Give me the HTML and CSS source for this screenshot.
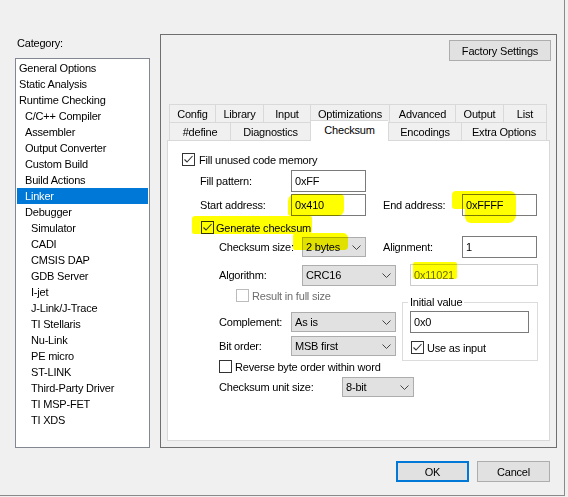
FILE: index.html
```html
<!DOCTYPE html>
<html>
<head>
<meta charset="utf-8">
<title>Options</title>
<link rel="stylesheet" href="styles.css">
</head>
<body>
<div class="dialog">
  <div class="main">
    <div class="left">
      <div class="cat-label">Category:</div>
      <div class="list">
        <div class="item">General Options</div>
        <div class="item">Static Analysis</div>
        <div class="item">Runtime Checking</div>
        <div class="item l1">C/C++ Compiler</div>
        <div class="item l1">Assembler</div>
        <div class="item l1">Output Converter</div>
        <div class="item l1">Custom Build</div>
        <div class="item l1">Build Actions</div>
        <div class="item l1 sel">Linker</div>
        <div class="item l1">Debugger</div>
        <div class="item l2">Simulator</div>
        <div class="item l2">CADI</div>
        <div class="item l2">CMSIS DAP</div>
        <div class="item l2">GDB Server</div>
        <div class="item l2">I-jet</div>
        <div class="item l2">J-Link/J-Trace</div>
        <div class="item l2">TI Stellaris</div>
        <div class="item l2">Nu-Link</div>
        <div class="item l2">PE micro</div>
        <div class="item l2">ST-LINK</div>
        <div class="item l2">Third-Party Driver</div>
        <div class="item l2">TI MSP-FET</div>
        <div class="item l2">TI XDS</div>
      </div>
    </div>
    <div class="panel">
      <div class="panel-top"><div class="btn factory">Factory Settings</div></div>
      <div class="tabs">
        <div class="tabrow">
          <div class="tab w-config">Config</div>
          <div class="tab w-library">Library</div>
          <div class="tab w-input">Input</div>
          <div class="tab w-optim">Optimizations</div>
          <div class="tab w-adv">Advanced</div>
          <div class="tab w-output">Output</div>
          <div class="tab w-list last">List</div>
        </div>
        <div class="tabrow">
          <div class="tab w-define">#define</div>
          <div class="tab w-diag">Diagnostics</div>
          <div class="tab w-check active">Checksum</div>
          <div class="tab w-enc">Encodings</div>
          <div class="tab w-extra last">Extra Options</div>
        </div>
      </div>
      <div class="content">
        <div class="row row-a">
          <span class="cb"><svg width="13" height="13" viewBox="0 0 13 13"><polyline points="2.5,6.5 5,9 10.5,3" fill="none" stroke="#333" stroke-width="1.1"/></svg></span>
          <span>Fill unused code memory</span>
        </div>
        <div class="row row-b">
          <span class="lbl w91">Fill pattern:</span>
          <span class="edit w75">0xFF</span>
        </div>
        <div class="row row-c">
          <span class="lbl w91">Start address:</span>
          <span class="edit w75">0x410</span>
          <span class="lbl w79 gap17">End address:</span>
          <span class="edit w75">0xFFFF</span>
        </div>
        <div class="row row-d">
          <span class="cb"><svg width="13" height="13" viewBox="0 0 13 13"><polyline points="2.5,6.5 5,9 10.5,3" fill="none" stroke="#333" stroke-width="1.1"/></svg></span>
          <span>Generate checksum</span>
        </div>
        <div class="row row-e">
          <span class="lbl w83">Checksum size:</span>
          <span class="select w64"><span>2 bytes</span><svg width="9" height="5" viewBox="0 0 9 5"><polyline points="0.5,0.5 4.5,4.5 8.5,0.5" fill="none" stroke="#444" stroke-width="1"/></svg></span>
          <span class="lbl w79 gap17">Alignment:</span>
          <span class="edit w75">1</span>
        </div>
        <div class="row row-f">
          <span class="lbl w83">Algorithm:</span>
          <span class="select w94 h21"><span>CRC16</span><svg width="9" height="5" viewBox="0 0 9 5"><polyline points="0.5,0.5 4.5,4.5 8.5,0.5" fill="none" stroke="#444" stroke-width="1"/></svg></span>
          <span class="edit disabled w128">0x11021</span>
        </div>
        <div class="row row-g">
          <span class="cb off"></span>
          <span class="dim">Result in full size</span>
        </div>
        <div class="block">
          <div class="lcol">
            <div class="row row-h">
              <span class="lbl w72">Complement:</span>
              <span class="select w105"><span>As is</span><svg width="9" height="5" viewBox="0 0 9 5"><polyline points="0.5,0.5 4.5,4.5 8.5,0.5" fill="none" stroke="#444" stroke-width="1"/></svg></span>
            </div>
            <div class="row row-i">
              <span class="lbl w72">Bit order:</span>
              <span class="select w105"><span>MSB first</span><svg width="9" height="5" viewBox="0 0 9 5"><polyline points="0.5,0.5 4.5,4.5 8.5,0.5" fill="none" stroke="#444" stroke-width="1"/></svg></span>
            </div>
            <div class="row row-j">
              <span class="cb"></span>
              <span>Reverse byte order within word</span>
            </div>
            <div class="row row-k">
              <span class="lbl w123">Checksum unit size:</span>
              <span class="select w72"><span>8-bit</span><svg width="9" height="5" viewBox="0 0 9 5"><polyline points="0.5,0.5 4.5,4.5 8.5,0.5" fill="none" stroke="#444" stroke-width="1"/></svg></span>
            </div>
          </div>
          <div class="group">
            <span class="legend">Initial value</span>
            <span class="edit w119 g-edit">0x0</span>
            <div class="row g-check">
              <span class="cb"><svg width="13" height="13" viewBox="0 0 13 13"><polyline points="2.5,6.5 5,9 10.5,3" fill="none" stroke="#333" stroke-width="1.1"/></svg></span>
              <span>Use as input</span>
            </div>
          </div>
        </div>
      </div>
    </div>
  </div>
  <div class="bottom">
    <div class="btn ok">OK</div>
    <div class="btn cancel">Cancel</div>
  </div>
  <div class="hl hl-start"></div>
  <div class="hl hl-gen"></div>
  <div class="hl hl-size"></div>
  <div class="hl hl-end1"></div>
  <div class="hl hl-end2"></div>
  <div class="hl hl-alg"></div>
</div>
</body>
</html>
```
FILE: styles.css
```css
* { box-sizing: border-box; }
html, body { margin: 0; padding: 0; }
body {
  background: #f0f0f0;
  font-family: "Liberation Sans", Arial, sans-serif;
  font-size: 11px;
  letter-spacing: -0.2px;
  color: #000;
  width: 568px;
  height: 497px;
  overflow: hidden;
}
.dialog {
  position: relative;
  width: 565px;
  height: 496px;
  border-right: 1px solid #8a8a8a;
  border-bottom: 1px solid #8a8a8a;
  padding: 34px 0 0 15px;
}
.main { display: flex; gap: 10px; height: 414px; }
.left { width: 135px; display: flex; flex-direction: column; }
.cat-label { margin: 1px 0 0 2px; height: 16px; line-height: 16px; }
.list {
  margin-top: 7px;
  height: 390px;
  border: 1px solid #828790;
  background: #fff;
  padding: 1px;
}
.item { height: 16px; line-height: 16px; padding-left: 2px; white-space: nowrap; }
.item.l1 { padding-left: 8px; }
.item.l2 { padding-left: 14px; }
.item.sel { background: #0078d7; color: #fff; }

.panel {
  width: 397px;
  height: 414px;
  border: 1px solid #6f6f6f;
  padding: 5px 5px 0 6px;
  display: flex;
  flex-direction: column;
}
.panel-top { display: flex; justify-content: flex-end; height: 21px; }
.btn {
  height: 21px;
  background: #e1e1e1;
  border: 1px solid #adadad;
  display: flex;
  align-items: center;
  justify-content: center;
  white-space: nowrap;
}
.factory { width: 102px; }

.tabs { margin: 43px 0 0 2px; }
.tabrow { display: flex; height: 18px; }
.tab {
  height: 18px;
  border-top: 1px solid #d9d9d9;
  border-left: 1px solid #d9d9d9;
  background: #f0f0f0;
  display: flex;
  align-items: center;
  justify-content: center;
  white-space: nowrap;
}
.tab.last { border-right: 1px solid #d9d9d9; }
.tab.active {
  position: relative;
  z-index: 1;
  margin-top: -2px;
  height: 21px;
  background: #fff;
  padding-bottom: 3px;
}
.w-config { width: 46px; }
.w-library { width: 48px; }
.w-input { width: 47px; }
.w-optim { width: 79px; }
.w-adv { width: 66px; }
.w-output { width: 48px; }
.w-list { width: 44px; }
.w-define { width: 61px; }
.w-diag { width: 80px; }
.w-check { width: 78px; }
.w-enc { width: 73px; }
.w-extra { width: 86px; }

.content {
  width: 383px;
  height: 301px;
  border: 1px solid #d9d9d9;
  background: #fff;
}
.row { display: flex; align-items: center; white-space: nowrap; }
.cb {
  width: 13px;
  height: 13px;
  border: 1px solid #333;
  background: #fff;
  flex: none;
  position: relative;
}
.cb svg { position: absolute; left: -1px; top: -1px; }
.cb.off { border-color: #bcbcbc; }
.dim { color: #6d6d6d; }
.lbl { flex: none; }
.w72 { width: 72px; }
.w79 { width: 79px; }
.w83 { width: 83px; }
.w91 { width: 91px; }
.w123 { width: 123px; }
.gap17 { margin-left: 17px; }
.edit {
  flex: none;
  height: 22px;
  border: 1px solid #7a7a7a;
  background: #fff;
  padding-left: 3px;
  display: flex;
  align-items: center;
}
.edit.disabled { border-color: #cccccc; color: #6d6d6d; margin-left: 14px; }
.w75 { width: 75px; }
.w119 { width: 119px; }
.w128 { width: 128px; }
.select {
  flex: none;
  height: 20px;
  border: 1px solid #adadad;
  background: #e1e1e1;
  padding: 0 4px 0 3px;
  display: flex;
  align-items: center;
  justify-content: space-between;
}
.select.h21 { height: 21px; }
.w64 { width: 64px; }
.w94 { width: 94px; }
.w105 { width: 105px; }
.select.w72 { width: 72px; }

.row-a { margin: 12px 0 0 14px; height: 13px; gap: 4px; }
.row-b { margin: 4px 0 0 32px; height: 22px; }
.row-c { margin: 2px 0 0 32px; height: 22px; }
.row-d { margin: 5px 0 0 33px; height: 13px; gap: 2px; }
.row-e { margin: 2px 0 0 51px; height: 22px; }
.row-f { margin: 6px 0 0 51px; height: 22px; }
.row-g { margin: 3px 0 0 68px; height: 13px; gap: 3px; }
.block { display: flex; }
.lcol { width: 183px; margin-left: 51px; padding-top: 10px; flex: none; }
.row-h { height: 20px; }
.row-i { height: 20px; margin-top: 4px; }
.row-j { height: 13px; margin-top: 4px; gap: 3px; }
.row-k { height: 20px; margin-top: 4px; }
.group {
  width: 136px;
  height: 59px;
  border: 1px solid #dcdcdc;
  flex: none;
}
.legend {
  display: block;
  width: fit-content;
  margin: -8px 0 0 5px;
  padding: 0 2px;
  line-height: 15px;
  background: #fff;
}
.g-edit { margin: 1px 0 0 7px; }
.g-check { margin: 8px 0 0 8px; height: 13px; gap: 3px; }

.bottom {
  display: flex;
  justify-content: flex-end;
  gap: 8px;
  margin-top: 13px;
  padding-right: 14px;
}
.ok { width: 73px; border: 2px solid #0078d7; }
.cancel { width: 73px; }

.hl {
  position: absolute;
  background: #ffff00;
  mix-blend-mode: multiply;
}
.hl-start { left: 288px; top: 194px; width: 56px; height: 22px; border-radius: 7px 4px 6px 3px; }
.hl-gen { left: 192px; top: 216px; width: 120px; height: 18px; border-radius: 3px 2px 4px 2px; }
.hl-size { left: 293px; top: 233px; width: 55px; height: 17px; border-radius: 3px 5px 4px 2px; }
.hl-end1 { left: 452px; top: 191px; width: 64px; height: 18px; border-radius: 4px 6px 3px 3px; }
.hl-end2 { left: 465px; top: 204px; width: 51px; height: 19px; border-radius: 3px 3px 8px 6px; }
.hl-alg { left: 413px; top: 262px; width: 44px; height: 17px; border-radius: 2px; }
```
